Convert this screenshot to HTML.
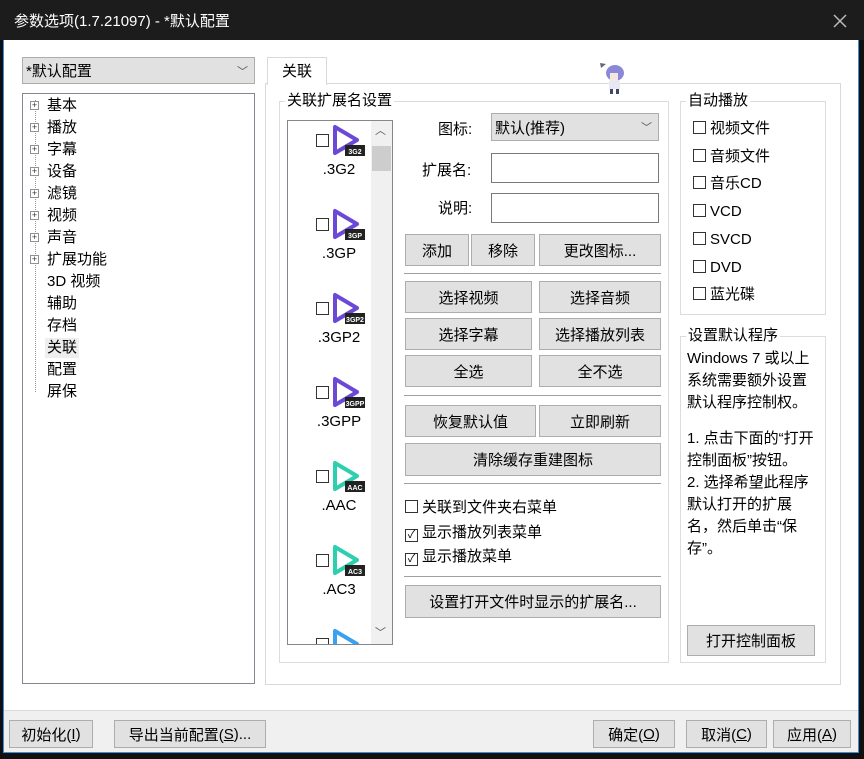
<!DOCTYPE html>
<html><head><meta charset="utf-8"><style>
*{box-sizing:border-box;margin:0;padding:0}
body{width:864px;height:759px;background:#101010;position:relative;overflow:hidden;font-family:"Liberation Sans","Noto Sans CJK SC",sans-serif;font-size:15px;color:#000}
.a{position:absolute}
#win{left:3px;top:0;width:856px;height:753px;background:#fff;border:1px solid #3b8fd8;border-top:none}
#title{left:0;top:0;width:864px;height:40px;background:#1c1c1c;color:#fff;font-size:15px;line-height:44px;padding-left:14px}
.btn{position:absolute;background:#e1e1e1;border:1px solid #adadad;text-align:center;font-size:15px;display:flex;align-items:center;justify-content:center}
.inp{position:absolute;background:#fff;border:1px solid #7a7a7a}
.grp{position:absolute;border:1px solid #dcdcdc}
.gl{position:absolute;background:#fff;padding:0 2px;font-size:15px;line-height:18px}
.cb{display:inline-block;width:13px;height:13px;border:1px solid #333;vertical-align:-1px;margin-right:4px;background:#fff;position:relative}
.tr{position:absolute;left:47px;font-size:15px;line-height:20px}
.pl{position:absolute;left:30px;width:9px;height:9px;border:1px solid #919191;background:#fff;font-size:9px;line-height:7px;text-align:center;color:#333}
.sep{position:absolute;left:404px;width:257px;height:1px;background:#a0a0a0}
</style></head><body>
<div id="win" class="a"></div>
<div id="title" class="a">参数选项(1.7.21097) - *默认配置</div>
<svg class="a" style="left:833px;top:14px" width="14" height="14"><path d="M1 1L13 13M13 1L1 13" stroke="#bbb" stroke-width="1.5"/></svg>
<!-- footer -->
<div class="a" style="left:4px;top:710px;width:854px;height:42px;background:#f0f0f0;border-top:1px solid #dadada"></div>
<div class="btn" style="left:9px;top:720px;width:84px;height:28px">初始化(<u>I</u>)</div>
<div class="btn" style="left:114px;top:720px;width:152px;height:28px">导出当前配置(<u>S</u>)...</div>
<div class="btn" style="left:593px;top:720px;width:82px;height:28px">确定(<u>O</u>)</div>
<div class="btn" style="left:686px;top:720px;width:81px;height:28px">取消(<u>C</u>)</div>
<div class="btn" style="left:773px;top:720px;width:78px;height:28px">应用(<u>A</u>)</div>
<!-- combo -->
<div class="btn" style="left:22px;top:57px;width:233px;height:27px;justify-content:space-between;padding:0 6px 0 3px">*默认配置<span style="font-size:11px;color:#555">﹀</span></div>
<!-- tree -->
<div class="a" style="left:22px;top:93px;width:233px;height:591px;border:1px solid #828790;background:#fff"></div>
<div class="a" style="left:35px;top:100px;width:0;height:292px;border-left:1px dotted #999"></div>
<div class="pl" style="top:101px">+</div><div class="tr" style="top:96px">基本</div>
<div class="pl" style="top:123px">+</div><div class="tr" style="top:118px">播放</div>
<div class="pl" style="top:145px">+</div><div class="tr" style="top:140px">字幕</div>
<div class="pl" style="top:167px">+</div><div class="tr" style="top:162px">设备</div>
<div class="pl" style="top:189px">+</div><div class="tr" style="top:184px">滤镜</div>
<div class="pl" style="top:211px">+</div><div class="tr" style="top:206px">视频</div>
<div class="pl" style="top:233px">+</div><div class="tr" style="top:228px">声音</div>
<div class="pl" style="top:255px">+</div><div class="tr" style="top:250px">扩展功能</div>
<div class="tr" style="top:272px">3D 视频</div>
<div class="tr" style="top:294px">辅助</div>
<div class="tr" style="top:316px">存档</div>
<div class="tr" style="top:338px;background:#eee;left:45px;padding:0 2px">关联</div>
<div class="tr" style="top:360px">配置</div>
<div class="tr" style="top:382px">屏保</div>
<!-- tab -->
<div class="a" style="left:265px;top:83px;width:576px;height:602px;border:1px solid #d9d9d9"></div>
<div class="a" style="left:267px;top:57px;width:60px;height:28px;border:1px solid #d9d9d9;border-bottom:none;background:#fff;text-align:center;line-height:27px">关联</div>
<!-- chibi -->
<svg class="a" style="left:598px;top:61px" width="34" height="34" viewBox="0 0 34 34"><path d="M2 2l6 1-5 4z" fill="#667"/><ellipse cx="17" cy="12" rx="9" ry="8" fill="#8b88d8"/><rect x="12" y="12" width="8" height="8" fill="#f6e6e0"/><rect x="11" y="20" width="11" height="8" fill="#e8e8f4"/><rect x="12" y="28" width="3" height="5" fill="#446"/><rect x="18" y="28" width="3" height="5" fill="#446"/></svg>
<!-- group 1 -->
<div class="grp" style="left:279px;top:101px;width:390px;height:562px"></div>
<div class="gl" style="left:285px;top:92px">关联扩展名设置</div>
<div class="a" style="left:287px;top:120px;width:106px;height:525px;border:1px solid #828790;background:#fff;overflow:hidden">
 <div class="a" style="left:83px;top:0;width:21px;height:523px;background:#f0f0f0"></div>
 <div class="a" style="left:84px;top:25px;width:19px;height:25px;background:#cdcdcd"></div>
 <div class="a" style="left:87px;top:1px;font-size:11px;color:#555">︿</div>
 <div class="a" style="left:87px;top:503px;font-size:11px;color:#555">﹀</div>
 <div id="items"></div>
</div>
<script>
var d=[["3G2","#6b48d6"],["3GP","#6b48d6"],["3GP2","#6b48d6"],["3GPP","#6b48d6"],["AAC","#2dcfae"],["AC3","#2dcfae"],["","#3aa0f0"]];
var h="";d.forEach(function(x,i){var t=3+84*i;
h+='<div class="a" style="left:28px;top:'+(t+10)+'px;width:13px;height:13px;border:1px solid #333;background:#fff"></div>';
h+='<svg class="a" style="left:43px;top:'+t+'px" width="34" height="34"><path d="M4 3 L4 29 L26 16 Z" fill="none" stroke="'+x[1]+'" stroke-width="4" stroke-linejoin="round"/>'+(x[0]?'<rect x="14" y="21" width="20" height="11" fill="#222"/><text x="24" y="30" font-size="7" fill="#fff" text-anchor="middle" font-family="Liberation Sans" font-weight="bold">'+x[0]+'</text>':'')+'</svg>';
if(x[0])h+='<div class="a" style="left:0;width:102px;text-align:center;top:'+(t+37)+'px">.'+x[0]+'</div>';});
document.getElementById("items").outerHTML=h;
</script>
<div class="a" style="left:438px;top:118px">图标:</div>
<div class="a" style="left:422px;top:159px">扩展名:</div>
<div class="a" style="left:438px;top:197px">说明:</div>
<div class="btn" style="left:491px;top:113px;width:168px;height:28px;justify-content:space-between;padding:0 6px 0 3px">默认(推荐)<span style="font-size:11px;color:#555">﹀</span></div>
<div class="inp" style="left:491px;top:153px;width:168px;height:30px"></div>
<div class="inp" style="left:491px;top:193px;width:168px;height:30px"></div>
<div class="btn" style="left:405px;top:234px;width:64px;height:32px">添加</div>
<div class="btn" style="left:471px;top:234px;width:64px;height:32px">移除</div>
<div class="btn" style="left:539px;top:234px;width:122px;height:32px">更改图标...</div>
<div class="sep" style="top:273px"></div>
<div class="btn" style="left:405px;top:281px;width:127px;height:32px">选择视频</div>
<div class="btn" style="left:539px;top:281px;width:122px;height:32px">选择音频</div>
<div class="btn" style="left:405px;top:318px;width:127px;height:32px">选择字幕</div>
<div class="btn" style="left:539px;top:318px;width:122px;height:32px">选择播放列表</div>
<div class="btn" style="left:405px;top:355px;width:127px;height:32px">全选</div>
<div class="btn" style="left:539px;top:355px;width:122px;height:32px">全不选</div>
<div class="sep" style="top:395px"></div>
<div class="btn" style="left:405px;top:405px;width:131px;height:32px">恢复默认值</div>
<div class="btn" style="left:539px;top:405px;width:122px;height:32px">立即刷新</div>
<div class="btn" style="left:405px;top:443px;width:256px;height:33px">清除缓存重建图标</div>
<div class="sep" style="top:483px"></div>
<div class="a" style="left:405px;top:496px"><span class="cb"></span>关联到文件夹右菜单</div>
<div class="a" style="left:405px;top:521px"><span class="cb" style="font-size:11px;line-height:11px;text-align:center">✓</span>显示播放列表菜单</div>
<div class="a" style="left:405px;top:545px"><span class="cb" style="font-size:11px;line-height:11px;text-align:center">✓</span>显示播放菜单</div>
<div class="sep" style="top:576px"></div>
<div class="btn" style="left:405px;top:585px;width:256px;height:33px">设置打开文件时显示的扩展名...</div>
<!-- right groups -->
<div class="grp" style="left:680px;top:101px;width:146px;height:214px"></div>
<div class="gl" style="left:686px;top:92px">自动播放</div>
<div class="a" style="left:693px;top:115px;line-height:27.7px"><span class="cb"></span>视频文件<br><span class="cb"></span>音频文件<br><span class="cb"></span>音乐CD<br><span class="cb"></span>VCD<br><span class="cb"></span>SVCD<br><span class="cb"></span>DVD<br><span class="cb"></span>蓝光碟</div>
<div class="grp" style="left:680px;top:336px;width:146px;height:327px"></div>
<div class="gl" style="left:686px;top:327px">设置默认程序</div>
<div class="a" style="left:687px;top:348px;width:140px;line-height:22px;font-size:15px">Windows 7 或以上<br>系统需要额外设置<br>默认程序控制权。<br><span style="display:block;height:14px"></span>1. 点击下面的“打开<br>控制面板”按钮。<br>2. 选择希望此程序<br>默认打开的扩展<br>名，然后单击“保<br>存”。</div>
<div class="btn" style="left:687px;top:625px;width:128px;height:31px">打开控制面板</div>
</body></html>
